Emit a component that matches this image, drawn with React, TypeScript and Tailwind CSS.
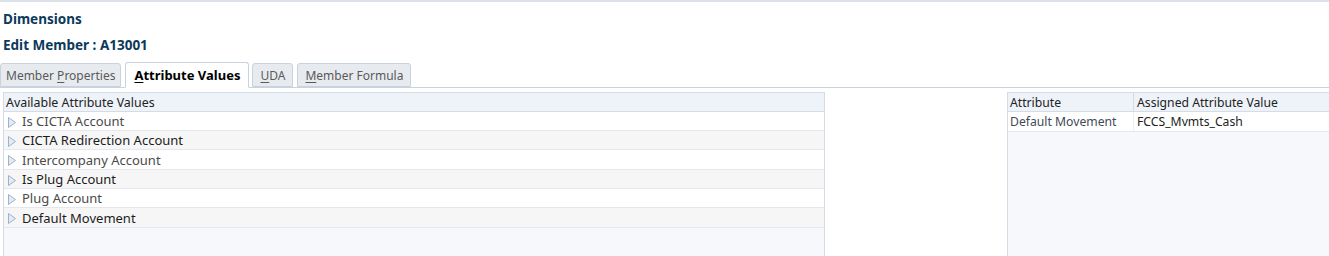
import React from "react";

const font = { fontFamily: '"Segoe UI", "Noto Sans", "Liberation Sans", sans-serif' };

const rows = [
  "Is CICTA Account",
  "CICTA Redirection Account",
  "Intercompany Account",
  "Is Plug Account",
  "Plug Account",
  "Default Movement",
];

function Arrow() {
  return (
    <svg width="8" height="11" viewBox="0 0 8 11" className="shrink-0">
      <polygon points="0.5,0.5 7.5,5.5 0.5,10.5" fill="#e3ebf5" stroke="#9db1cb" strokeWidth="1" />
    </svg>
  );
}

function Tab({ label, u, active, pad }: { label: string; u: number; active?: boolean; pad: string }) {
  const text = (
    <span className="whitespace-pre">
      {label.slice(0, u)}
      <span className="underline underline-offset-2">{label[u]}</span>
      {label.slice(u + 1)}
    </span>
  );
  if (active) {
    return (
      <div className={`h-[26px] ${pad} flex items-center pt-[1px] bg-white border border-[#c9d2dd] border-b-white rounded-t-[3px] -mb-px text-[13px] font-bold text-black`}>
        {text}
      </div>
    );
  }
  return (
    <div className={`h-[24px] ${pad} flex items-center pt-[1px] bg-[#e7ebf0] border border-[#c9d2dd] rounded-t-[3px] text-[12px] text-[#5a5a5a]`}>
      {text}
    </div>
  );
}

export default function App() {
  return (
    <div className="w-[1329px] h-[256px] overflow-hidden bg-white" style={font}>
      <div className="h-[2px] bg-[#dde2e8]" />
      <div className="pl-[3px] pt-[8px] text-[13.5px] font-bold text-[#0c3a5b] leading-[18px]">Dimensions</div>
      <div className="pl-[3px] pt-[8px] text-[13.5px] font-bold text-[#0c3a5b] leading-[18px]">Edit Member : A13001</div>
      <div className="mt-[7px] flex items-end gap-[3px] border-b border-[#c9d2dd] h-[27px]">
        <Tab label="Member Properties" u={7} pad="px-[5px] mr-[1px]" />
        <Tab label="Attribute Values" u={0} active pad="px-[8px]" />
        <Tab label="UDA" u={0} pad="px-[7px] mr-[1px]" />
        <Tab label="Member Formula" u={0} pad="px-[7px]" />
      </div>
      <div className="mt-[4px] flex pl-[3px]">
        <div className="w-[822px] h-[170px] border border-[#d5dce5] bg-[#f6f8fc]">
          <div className="h-[19px] flex items-center pl-[2px] pt-[2px] bg-[#eef2f9] border-b border-[#d5dce5] text-[12.4px] text-[#222]">
            Available Attribute Values
          </div>
          {rows.map((r, i) => (
            <div
              key={r}
              className={`flex items-center gap-[6px] pl-[4px] pt-[2px] border-b border-[#e4e8ee] text-[13px] ${
                i % 2 === 0 ? "bg-white text-[#4a4a4a]" : "bg-[#f6f6f6] text-[#1c1c1c]"
              } ${i === 2 || i === 5 ? "h-[20px]" : "h-[19px]"}`}
            >
              <Arrow />
              {r}
            </div>
          ))}
        </div>
        <div className="w-[182px]" />
        <div className="flex-1 h-[170px] border border-[#d5dce5] border-r-0 bg-[#f6f8fc] text-[12.2px]">
          <div className="h-[19px] flex bg-[#eef2f9] border-b border-[#d5dce5] text-[#222]">
            <div className="w-[126px] pl-[2px] pt-[2px] flex items-center border-r border-[#d5dce5]">Attribute</div>
            <div className="flex-1 pl-[3px] pt-[2px] flex items-center">Assigned Attribute Value</div>
          </div>
          <div className="h-[20px] flex bg-white border-b border-[#e4e8ee] text-[#3f4a55]">
            <div className="w-[126px] pl-[2px] pt-[2px] flex items-center border-r border-[#eceff3]">Default Movement</div>
            <div className="flex-1 pl-[3px] pt-[2px] flex items-center text-[#222]">FCCS_Mvmts_Cash</div>
          </div>
        </div>
      </div>
    </div>
  );
}
